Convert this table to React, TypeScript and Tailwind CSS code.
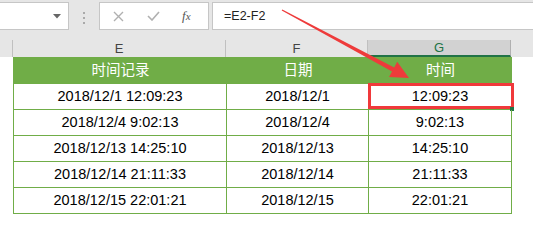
import React from 'react';

const rows = [
  ['2018/12/1 12:09:23', '2018/12/1', '12:09:23'],
  ['2018/12/4 9:02:13', '2018/12/4', '9:02:13'],
  ['2018/12/13 14:25:10', '2018/12/13', '14:25:10'],
  ['2018/12/14 21:11:33', '2018/12/14', '21:11:33'],
  ['2018/12/15 22:01:21', '2018/12/15', '22:01:21'],
];

export default function App() {
  return (
    <div
      className="relative w-[533px] h-[244px] overflow-hidden bg-white text-black"
      style={{ fontFamily: '"Liberation Sans", "Noto Sans CJK SC", sans-serif' }}
    >
      {/* Formula bar */}
      <div className="flex h-[40px] items-start bg-[#e6e6e6] pt-[2px]">
        <div className="relative flex h-[28px] w-[69px] items-center justify-end border border-l-0 border-[#c6c6c6] bg-white pr-[7px]">
          <svg width="8" height="5" viewBox="0 0 8 5">
            <path d="M0 0 H8 L4 4.5 Z" fill="#666" />
          </svg>
        </div>
        <div className="flex w-[30px] flex-col items-center gap-[3px] pt-[10px]">
          <span className="h-[2px] w-[2px] bg-[#aaa]" />
          <span className="h-[2px] w-[2px] bg-[#aaa]" />
          <span className="h-[2px] w-[2px] bg-[#aaa]" />
        </div>
        <div className="flex h-[28px] w-[110px] items-center border border-[#c6c6c6] bg-white">
          <svg className="ml-[13px]" width="11" height="11" viewBox="0 0 11 11">
            <path d="M1 1 L10 10 M10 1 L1 10" stroke="#b0b0b0" strokeWidth="1.4" />
          </svg>
          <svg className="ml-[23px]" width="13" height="10" viewBox="0 0 13 10">
            <path d="M1 5 L5 9 L12 1" stroke="#b0b0b0" strokeWidth="1.6" fill="none" />
          </svg>
          <span
            className="ml-[22px] text-[13px] italic text-[#555]"
            style={{ fontFamily: '"Liberation Serif", serif' }}
          >
            f<span className="text-[11px]">x</span>
          </span>
        </div>
        <div className="ml-[3px] flex h-[28px] flex-1 items-center border border-r-0 border-[#c6c6c6] bg-white pl-[11px] text-[12.5px] text-[#222]">
          =E2-F2
        </div>
      </div>

      {/* Column headers */}
      <div className="flex h-[17px] bg-[#e6e6e6] text-[13px] text-[#444]">
        <div className="w-[13px] border-r border-[#c0c0c0]" />
        <div className="flex w-[213px] items-center justify-center border-r border-[#c0c0c0] leading-none">E</div>
        <div className="flex w-[142px] items-center justify-center border-r border-[#c0c0c0] leading-none">F</div>
        <div className="flex w-[143px] items-center justify-center border-b-2 border-r border-b-[#217346] border-r-[#b0b0b0] bg-[#d2d2d2] leading-none text-[#217346]">
          G
        </div>
        <div className="flex-1" />
      </div>

      {/* Table */}
      <div className="ml-[13px] w-[499px] border-l border-[#70ad47] text-[14.5px]">
        <div className="flex h-[27px] bg-[#70ad47] text-white">
          <div className="flex w-[213px] items-center justify-center">时间记录</div>
          <div className="flex w-[142px] items-center justify-center">日期</div>
          <div className="flex flex-1 items-center justify-center">时间</div>
        </div>
        {rows.map((r, i) => (
          <div key={i} className="flex h-[26px] border-b border-[#70ad47]">
            <div className="flex w-[213px] items-center justify-center border-r border-[#70ad47]">{r[0]}</div>
            <div className="flex w-[142px] items-center justify-center border-r border-[#70ad47]">{r[1]}</div>
            <div className="relative flex flex-1 items-center justify-center border-r border-[#70ad47]">
              {r[2]}
              {i === 0 && (
                <>
                  <div className="absolute -left-[1px] -top-[1px] h-[26px] w-[146px] border-[3px] border-[#f0393b]" />
                  <div className="absolute -bottom-[2px] -right-[3px] h-[4px] w-[4px] bg-[#217346]" />
                </>
              )}
            </div>
          </div>
        ))}
      </div>

      {/* Red arrow annotation */}
      <svg className="absolute left-0 top-0" width="533" height="244" viewBox="0 0 533 244">
        <polygon
          points="282.3,9.5 394.2,67.6 397.2,61.8 409,78 389,77 392,71.5 281.7,10.5"
          fill="#ee3b3b"
        />
      </svg>
    </div>
  );
}
